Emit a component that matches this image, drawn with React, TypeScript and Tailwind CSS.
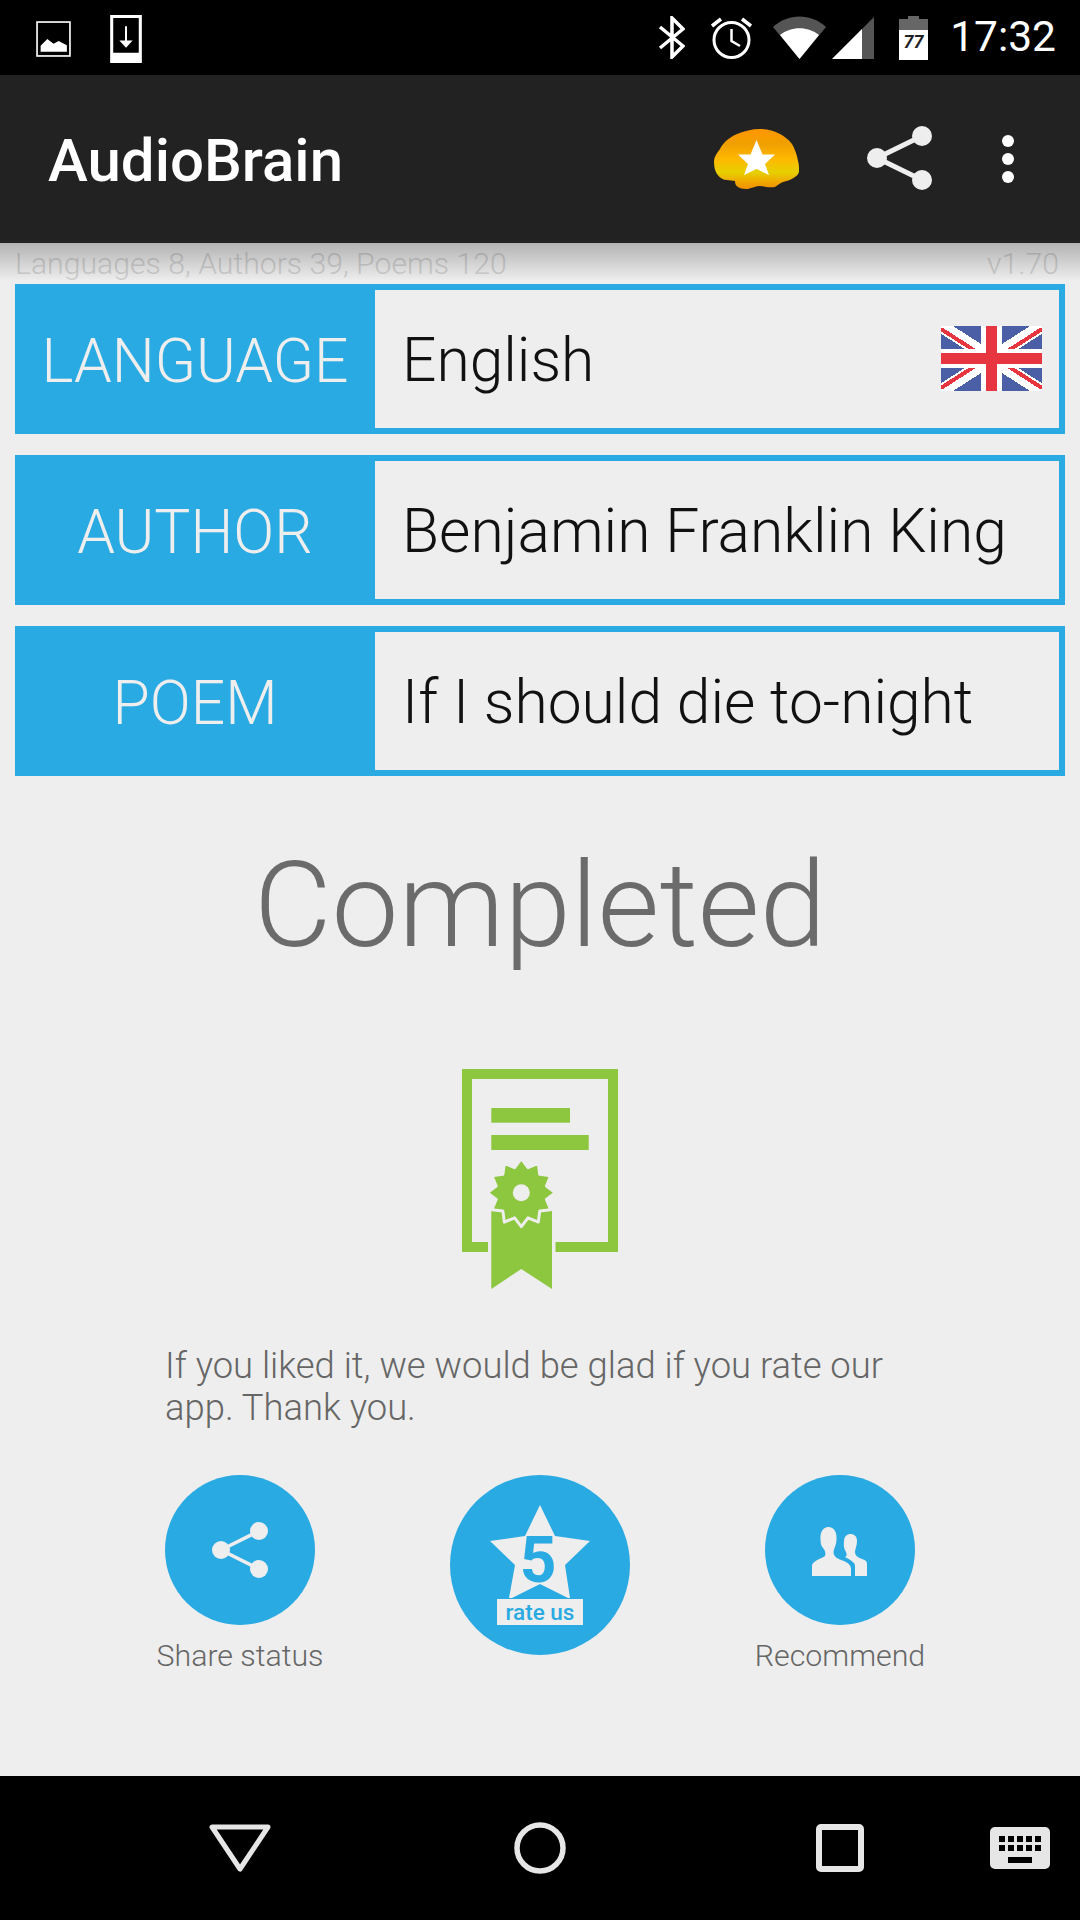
const BLUE = "#2aaae2";

// seal on the certificate: 12 pointed burst
const sealPoints = Array.from({ length: 24 }, (_, i) => {
  const r = i % 2 === 0 ? 34 : 26;
  const a = (i * Math.PI) / 12;
  return `${(59.3 + r * Math.sin(a)).toFixed(1)},${(123.7 - r * Math.cos(a)).toFixed(1)}`;
}).join(" ");

function StatusBar() {
  return (
    <div className="h-[75px] bg-black flex items-center shrink-0 relative">
      <svg className="ml-[36px] mt-[3px]" width="35" height="36" viewBox="0 0 34 35">
        <rect x="1" y="1" width="32" height="33" fill="none" stroke="#fff" strokeWidth="1.6" />
        <path d="M4.5 30 V24 L11 17.5 L17 22 L22 19.5 L30 23.5 V30 Z" fill="#fff" />
      </svg>
      <svg className="ml-[39px] mt-[3px]" width="32" height="48" viewBox="0 0 31 47">
        <path d="M0 0 H31 V47 H0 Z M3 3 V37 H28 V3 Z" fill="#fff" fillRule="evenodd" />
        <path d="M15.5 11 V28" stroke="#fff" strokeWidth="2" />
        <path d="M9 25 H22 L15.5 32 Z" fill="#fff" />
      </svg>
      <div className="ml-auto flex items-center h-full">
        <svg width="27" height="43" viewBox="0 0 27 43">
          <path d="M2 11 L25 30 L14 41 V2 L25 13 L2 32" fill="none" stroke="#fff" strokeWidth="3.5" />
        </svg>
        <svg className="ml-[25px]" width="43" height="43" viewBox="0 0 43 43">
          <circle cx="21.5" cy="24" r="17.5" fill="none" stroke="#fff" strokeWidth="3" />
          <path d="M21.5 13 V25 L30 30" fill="none" stroke="#fff" strokeWidth="2.5" />
          <path d="M2 10 L11 3 M41 10 L32 3" stroke="#fff" strokeWidth="3.5" />
        </svg>
        <svg className="ml-[20px]" width="53" height="43" viewBox="0 0 53 43">
          <path d="M0 11 C15 -3 38 -3 53 11 L26.5 43 Z" fill="#555" />
          <path d="M7 19 C18 10 35 10 46 19 L26.5 43 Z" fill="#fff" />
        </svg>
        <svg className="ml-[6px]" width="42" height="42" viewBox="0 0 42 42">
          <path d="M0 42 L42 0 V42 Z" fill="#555" />
          <path d="M0 42 L30 12 V42 Z" fill="#fff" />
        </svg>
        <svg className="ml-[25px]" width="29" height="44" viewBox="0 0 29 44">
          <path d="M9 0 H20 V3 H29 V14 H0 V3 H9 Z" fill="#666" />
          <rect x="0" y="14" width="29" height="30" fill="#fff" />
          <text x="14.5" y="32" textAnchor="middle" fontFamily="Roboto" fontSize="18" fontWeight="700" fontStyle="italic" fill="#222">77</text>
        </svg>
        <span className="ml-[22px] mr-[24px] text-[42.5px] leading-none text-white font-['Roboto',sans-serif]">17:32</span>
      </div>
    </div>
  );
}

function AppBar() {
  return (
    <div className="h-[168px] bg-[#222222] flex items-center shrink-0">
      <span className="ml-[48px] mt-[4px] text-[60px] leading-none font-medium text-white font-['Roboto',sans-serif]">AudioBrain</span>
      <svg className="ml-auto" width="85" height="60" viewBox="0 0 85 60">
        <defs>
          <linearGradient id="brain" x1="0" y1="0" x2="0" y2="1">
            <stop offset="0" stopColor="#ff9600" />
            <stop offset="0.25" stopColor="#f0a000" />
            <stop offset="0.5" stopColor="#ffb800" />
            <stop offset="0.72" stopColor="#e6d000" />
            <stop offset="0.88" stopColor="#f0a800" />
            <stop offset="1" stopColor="#f09000" />
          </linearGradient>
        </defs>
        <path
          d="M46 0 C38 0 30 2 23 5 C14 9 9 14 6 20 C3 24 0 28 0 32 C0 38 1 42 3 45 C6 49 9 51 13 51 L21 52 C21 55 22 57 24 58 C27 60 31 60 34 60 C38 59 42 57 46 57 C50 57 54 59 61 58 C64 56 66 54 69 53 C74 52 78 50 81 48 C84 46 85 44 85 42 C85 38 85 35 84 32 C83 26 81 20 78 15 C74 10 70 7 66 5 C60 2 53 0 46 0 Z"
          fill="url(#brain)"
        />
        <path d="M42.5 11 L48.5 25.5 L61 25.5 L51 35 L55 46 L42.5 40 L30 46 L34 35 L24 25.5 L36.5 25.5 Z" fill="#fff" />
      </svg>
      <svg className="ml-[68px] -mt-[2px]" width="65" height="64" viewBox="0 0 65 64">
        <circle cx="10" cy="32" r="10" fill="#eee" />
        <circle cx="55" cy="10" r="10" fill="#eee" />
        <circle cx="55" cy="54" r="10" fill="#eee" />
        <path d="M55 10 L10 32 L55 54" fill="none" stroke="#eee" strokeWidth="5" />
      </svg>
      <div className="ml-[70px] mr-[66px] flex flex-col gap-[6px]">
        <div className="w-[12px] h-[12px] rounded-full bg-white" />
        <div className="w-[12px] h-[12px] rounded-full bg-white" />
        <div className="w-[12px] h-[12px] rounded-full bg-white" />
      </div>
    </div>
  );
}

function UkFlag() {
  return (
    <svg width="101" height="65" viewBox="0 0 101 65" className="shrink-0 -mt-[2px]" shapeRendering="crispEdges">
      <rect width="101" height="65" fill="#4a5fa5" />
      <path d="M0 0 L101 65 M101 0 L0 65" stroke="#fff" strokeWidth="13" />
      <path d="M0 3 L42 30 M101 62 L59 35" stroke="#e83640" strokeWidth="4" />
      <path d="M101 3 L59 30 M0 62 L42 35" stroke="#e83640" strokeWidth="4" />
      <rect x="40" width="21" height="65" fill="#fff" />
      <rect y="23" width="101" height="19" fill="#fff" />
      <rect x="45" width="11" height="65" fill="#e83640" />
      <rect y="27" width="101" height="11" fill="#e83640" />
    </svg>
  );
}

function SelectRow({ label, value, flag }: { label: string; value: string; flag?: boolean }) {
  return (
    <div className="h-[150px] flex bg-[#2aaae2] border-[6px] border-[#2aaae2]">
      <div className="w-[360px] -ml-[6px] flex items-center justify-center text-[60.5px] font-light text-[#eeeeee]">
        <span className="mt-[6px]">{label}</span>
      </div>
      <div className="flex-1 bg-[#eeeeee] flex items-center pl-[27px] pr-[17px] text-[60.5px] font-[350] text-[#111111] leading-none">
        <span className="mt-[5px] whitespace-nowrap">{value}</span>
        {flag && <div className="ml-auto"><UkFlag /></div>}
      </div>
    </div>
  );
}

function Certificate() {
  return (
    <svg width="156" height="220" viewBox="0 0 156 220" className="shrink-0">
      <path d="M26 183 H0 V0 H156 V183 H93.5 V173 H146 V10 H10 V173 H26 Z" fill="#8dc63f" />
      <rect x="29.3" y="39" width="78.7" height="14.7" fill="#8dc63f" />
      <rect x="29.3" y="66" width="97.4" height="15" fill="#8dc63f" />
      <path d="M29.3 141 H90 V220 L59.3 200 L29.3 220 Z" fill="#8dc63f" />
      <polygon points={sealPoints} fill="#8dc63f" stroke="#eeeeee" strokeWidth="3" strokeLinejoin="round" />
      <circle cx="59.3" cy="123.7" r="8.5" fill="#eeeeee" />
    </svg>
  );
}

function ShareBtn() {
  return (
    <div className="w-[150px] flex flex-col items-center">
      <div className="w-[150px] h-[150px] rounded-full bg-[#2aaae2] flex items-center justify-center">
        <svg width="56" height="56" viewBox="0 0 56 56">
          <circle cx="9" cy="28" r="9" fill="#eee" />
          <circle cx="47" cy="9" r="9" fill="#eee" />
          <circle cx="47" cy="47" r="9" fill="#eee" />
          <path d="M47 9 L9 28 L47 47" fill="none" stroke="#eee" strokeWidth="3.5" />
        </svg>
      </div>
      <span className="mt-[16px] text-[30.3px] leading-none font-light text-[#666666] whitespace-nowrap">Share status</span>
    </div>
  );
}

function RateBtn() {
  return (
    <div className="w-[180px] h-[180px] rounded-full bg-[#2aaae2] shrink-0">
      <svg width="180" height="180" viewBox="0 0 180 180">
        <polygon points="90,30 105,61 140,66 115,90 120,123 118,123 90,109 62,123 59,123 65,90 40,66 75,61" fill="#eee" />
        <rect x="47" y="124" width="86" height="26" fill="#eee" />
        <text x="88" y="107" textAnchor="middle" fontFamily="Roboto" fontWeight="700" fontSize="64" fill={BLUE}>5</text>
        <text x="90" y="144.5" textAnchor="middle" fontFamily="Roboto" fontWeight="500" fontSize="22.5" fill={BLUE}>rate us</text>
      </svg>
    </div>
  );
}

function RecommendBtn() {
  return (
    <div className="w-[150px] flex flex-col items-center">
      <div className="w-[150px] h-[150px] rounded-full bg-[#2aaae2]">
        <svg width="150" height="150" viewBox="0 0 150 150">
          <path
            d="M47 101 V90 C49 85 56 84 60 81 C61 78 60 75 58 73 C56 71 55.500 68 55.500 64 C55 57 58 52 63.500 52 C69 52 72 57 71.500 64 C71.500 70 69 73 68.500 77 C68.500 82 73 84 79 86 C83 88 86 90 86 94 V101 Z"
            fill="#eee"
          />
          <path
            d="M80 82 C82 81 82 80 81 77 C79 74 78.500 71 79 66 C79.500 61 82 59 85.500 59 C89 59 92 61 92 66 C92 71 90 74 90 77 C90 80 92 82 97 84 C100 85 102 86 102 89 V101 H90 V91 C90 87 85 85 80 82 Z"
            fill="#eee"
          />
        </svg>
      </div>
      <span className="mt-[16px] text-[30.3px] leading-none font-light text-[#666666] whitespace-nowrap">Recommend</span>
    </div>
  );
}

function NavBar() {
  return (
    <div className="h-[144px] bg-black shrink-0 flex items-center">
      <svg className="ml-[209px]" width="62" height="48" viewBox="0 0 62 48">
        <path d="M3 3 H59 L31 45 Z" fill="none" stroke="#e6e6e6" strokeWidth="5" strokeLinejoin="round" />
      </svg>
      <svg className="ml-[243px]" width="52" height="52" viewBox="0 0 52 52">
        <circle cx="26" cy="26" r="23" fill="none" stroke="#e6e6e6" strokeWidth="5.500" />
      </svg>
      <svg className="ml-[250px]" width="48" height="48" viewBox="0 0 48 48">
        <rect x="3" y="3" width="42" height="42" rx="2" fill="none" stroke="#e6e6e6" strokeWidth="6" />
      </svg>
      <svg className="ml-[126px]" width="60" height="42" viewBox="0 0 60 42">
        <rect width="60" height="42" rx="5" fill="#e6e6e6" />
        {[0, 1, 2, 3, 4].map((i) => (
          <g key={i} fill="#000">
            <rect x={9 + i * 9} y="9" width="6" height="6" />
            <rect x={9 + i * 9} y="18" width="6" height="6" />
          </g>
        ))}
        <rect x="18" y="30" width="24" height="6" fill="#000" />
      </svg>
    </div>
  );
}

export default function App() {
  return (
    <div className="w-[1080px] h-[1920px] flex flex-col bg-[#eeeeee] font-['Roboto',sans-serif] overflow-hidden">
      <StatusBar />
      <AppBar />
      <div className="flex-1 relative flex flex-col">
        {/* shadow under the action bar */}
        <div className="absolute top-0 left-0 right-0 h-[38px] bg-gradient-to-b from-black/25 to-transparent" />
        <div className="h-[41px] px-[15px] pt-[2px] flex items-center justify-between text-[30.2px] font-light text-[#cfcfcf] leading-none">
          <span>Languages 8, Authors 39, Poems 120</span>
          <span className="mr-[6px]">v1.70</span>
        </div>
        <div className="px-[15px] flex flex-col gap-[21px]">
          <SelectRow label="LANGUAGE" value="English" flag />
          <SelectRow label="AUTHOR" value="Benjamin Franklin King" />
          <SelectRow label="POEM" value="If I should die to-night" />
        </div>
        <div className="mt-[59px] text-center text-[119.5px] leading-[140px] font-light text-[#6b6b6b]">Completed</div>
        <div className="mt-[94px] flex justify-center">
          <Certificate />
        </div>
        <div className="mt-[56px] px-[165px] text-[36.4px] leading-[42px] font-light text-[#666666] whitespace-nowrap">
          If you liked it, we would be glad if you rate our
          <br />
          app. Thank you.
        </div>
        <div className="mt-[46px] mx-[165px] flex justify-between items-start">
          <ShareBtn />
          <RateBtn />
          <RecommendBtn />
        </div>
      </div>
      <NavBar />
    </div>
  );
}
